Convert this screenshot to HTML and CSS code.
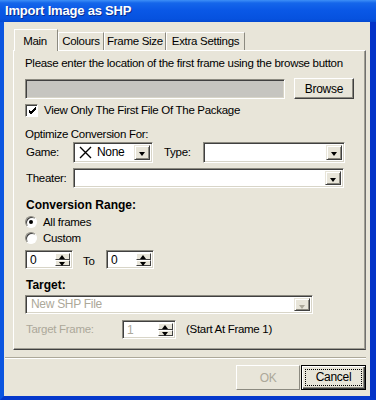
FILE: index.html
```html
<!DOCTYPE html>
<html lang="en">

<head>
    <meta charset="UTF-8">
    <title>Import Image as SHP</title>
    <link rel="stylesheet" href="styles.css">
</head>

<body>
    <div class="window">
        <div class="titlebar">Import Image as SHP</div>

        <div class="client">
            <div class="tabs">
                <div class="tab active">Main</div>
                <div class="tab">Colours</div>
                <div class="tab">Frame Size</div>
                <div class="tab">Extra Settings</div>
            </div>

            <div class="panel">
                <div class="row label-row">Please enter the location of the first frame using the browse button</div>

                <div class="row file-row">
                    <div class="textbox readonly"></div>
                    <button class="btn browse">Browse</button>
                </div>

                <div class="row check-row">
                    <span class="checkbox">
                        <svg width="9" height="9" viewBox="0 0 9 9">
                            <path d="M1 4 L3 6 L8 1 M1 5 L3 7 L8 2 M1 6 L3 8 L8 3" stroke="#000" stroke-width="1" fill="none"/>
                        </svg>
                    </span>
                    <span>View Only The First File Of The Package</span>
                </div>

                <div class="row optimize-row">Optimize Conversion For:</div>

                <div class="row game-row">
                    <span class="field-label">Game:</span>
                    <div class="combo game-combo">
                        <span class="combo-value">
                            <svg width="13" height="13" viewBox="0 0 13 13">
                                <path d="M1 1 L12 12 M12 1 L1 12" stroke="#000" stroke-width="1.4" fill="none"/>
                            </svg>
                            None
                        </span>
                        <span class="drop"></span>
                    </div>
                    <span class="field-label type-label">Type:</span>
                    <div class="combo type-combo"><span class="combo-value"></span><span class="drop"></span></div>
                </div>

                <div class="row theater-row">
                    <span class="field-label">Theater:</span>
                    <div class="combo theater-combo"><span class="combo-value"></span><span class="drop"></span></div>
                </div>

                <div class="row heading range-heading">Conversion Range:</div>

                <div class="row radio-row first">
                    <span class="radio checked"></span>
                    <span>All frames</span>
                </div>
                <div class="row radio-row">
                    <span class="radio"></span>
                    <span>Custom</span>
                </div>

                <div class="row spin-row">
                    <div class="spin range-spin"><span class="spin-value">0</span><span class="spin-btns"><span class="up"></span><span class="down"></span></span></div>
                    <span class="to-label">To</span>
                    <div class="spin range-spin"><span class="spin-value">0</span><span class="spin-btns"><span class="up"></span><span class="down"></span></span></div>
                </div>

                <div class="row heading target-heading">Target:</div>

                <div class="row target-row">
                    <div class="combo target-combo disabled"><span class="combo-value">New SHP File</span><span class="drop"></span></div>
                </div>

                <div class="row frame-row">
                    <span class="frame-label">Target Frame:</span>
                    <div class="spin frame-spin disabled"><span class="spin-value">1</span><span class="spin-btns"><span class="up"></span><span class="down"></span></span></div>
                    <span class="start-note">(Start At Frame 1)</span>
                </div>
            </div>

            <div class="separator"></div>

            <div class="buttons">
                <button class="btn ok" disabled>OK</button>
                <button class="btn cancel"><span class="focus">Cancel</span></button>
            </div>
        </div>
    </div>
</body>

</html>
```

FILE: styles.css
```css
:root {
    --face: #e8e5d9;
    --light: #ffffff;
    --shadow: #8c8a80;
    --dark: #404040;
    --gray-text: #aca899;
}

* {
    box-sizing: border-box;
    margin: 0;
    padding: 0;
}

body {
    font-family: 'Liberation Sans', Arial, sans-serif;
    font-size: 11.5px;
    letter-spacing: -0.3px;
    color: #000;
    background: #fff;
}

.window {
    width: 376px;
    height: 400px;
    display: flex;
    flex-direction: column;
}

.titlebar {
    height: 22px;
    padding: 3px 0 0 5px;
    color: #fff;
    font-weight: bold;
    font-size: 13px;
    letter-spacing: -0.2px;
    line-height: 16px;
    background: linear-gradient(#3d8ff7 0, #1566ea 3px, #0a58e6 10px, #0652df 19px, #0448d0 22px);
    text-shadow: 1px 1px #0a2f8f;
}

.client {
    flex: 1;
    background: var(--face);
    border-left: 4px solid #0b55e0;
    border-right: 6px solid #0433c8;
    border-bottom: 4px solid #0438cc;
    display: flex;
    flex-direction: column;
}

/* tabs */
.tabs {
    display: flex;
    align-items: flex-end;
    height: 28px;
    padding-left: 10px;
}

.tab {
    height: 18px;
    line-height: 16px;
    text-align: center;
    white-space: nowrap;
    border-top: 1px solid var(--light);
    border-left: 1px solid var(--light);
    border-right: 1px solid var(--shadow);
}

.tab.active {
    position: relative;
    height: 22px;
    width: 44px;
    padding: 3px 2px 0 0;
    margin-bottom: -1px;
    background: var(--face);
    z-index: 1;
}

.tab:nth-child(2) {
    width: 46px;
}

.tab:nth-child(3) {
    width: 62px;
}

.tab:nth-child(4) {
    width: 79px;
}

.panel {
    height: 300px;
    margin: 0 4px 0 9px;
    padding: 0 11px;
    border-top: 1px solid var(--light);
    border-left: 1px solid var(--light);
    border-right: 1px solid #707070;
    border-bottom: 1px solid var(--dark);
    box-shadow: inset -1px -1px #a09e94;
}

.row {
    display: flex;
    align-items: center;
    line-height: 13px;
    white-space: nowrap;
}

.label-row {
    margin-top: 6px;
    height: 13px;
}

.file-row {
    margin-top: 8px;
    height: 21px;
}

.check-row {
    margin-top: 4px;
    height: 14px;
}

.optimize-row {
    margin-top: 11px;
    height: 13px;
}

.game-row {
    margin-top: 1px;
    height: 21px;
}

.theater-row {
    margin-top: 5px;
    height: 20px;
}

.range-heading {
    margin-top: 10px;
    height: 14px;
}

.radio-row {
    margin-top: 2px;
    height: 14px;
}

.radio-row.first {
    margin-top: 3px;
}

.spin-row {
    margin-top: 5px;
    height: 19px;
}

.target-heading {
    margin-top: 9px;
    height: 14px;
}

.target-row {
    margin-top: 3px;
    height: 19px;
}

.frame-row {
    margin-top: 6px;
    height: 19px;
}

.heading {
    font-weight: bold;
    font-size: 12px;
    letter-spacing: 0;
    padding-left: 1px;
}

/* sunken boxes */
.textbox,
.combo,
.spin {
    border: 1px solid;
    border-color: var(--shadow) var(--light) var(--light) var(--shadow);
    box-shadow: inset 1px 1px var(--dark), inset -1px -1px #d8d5c8;
    background: #fff;
}

.textbox.readonly {
    width: 264px;
    height: 20px;
    background: #c6c5c0;
}

.btn {
    font-family: inherit;
    font-size: 11.5px;
    letter-spacing: -0.3px;
    color: #000;
    background: var(--face);
    border: 1px solid;
    border-color: var(--light) var(--dark) var(--dark) var(--light);
    box-shadow: inset -1px -1px #8c8a80;
}

.browse {
    width: 61px;
    height: 21px;
    margin-left: 9px;
    font-size: 12px;
}

.checkbox {
    width: 13px;
    height: 13px;
    margin-right: 6px;
    border: 1px solid;
    border-color: var(--shadow) var(--light) var(--light) var(--shadow);
    box-shadow: inset 1px 1px var(--dark);
    background: #fff;
    display: flex;
    align-items: center;
    justify-content: center;
    padding: 1px 0 0 1px;
}

.field-label {
    width: 48px;
    padding-left: 1px;
}

.type-label {
    width: 40px;
    margin-left: 10px;
}

.combo {
    display: flex;
    height: 21px;
    padding: 2px;
}

.combo-value {
    flex: 1;
    display: flex;
    align-items: center;
    gap: 5px;
    padding-left: 3px;
    font-size: 12px;
}

.drop {
    position: relative;
    width: 16px;
    border: 1px solid;
    border-color: var(--face) var(--dark) var(--dark) var(--face);
    box-shadow: inset 1px 1px var(--light), inset -1px -1px #8c8a80;
    background: var(--face);
}

.drop::after {
    content: '';
    position: absolute;
    left: 4px;
    top: 6px;
    border-left: 3.5px solid transparent;
    border-right: 3.5px solid transparent;
    border-top: 4px solid #000;
}

.game-combo {
    width: 80px;
}

.type-combo {
    width: 142px;
}

.theater-combo {
    width: 271px;
    height: 20px;
}

.target-combo {
    width: 288px;
    height: 19px;
}

.disabled .combo-value,
.disabled .spin-value {
    color: var(--gray-text);
}

.disabled .drop::after {
    border-top-color: var(--gray-text);
}

/* radio */
.radio {
    position: relative;
    width: 12px;
    height: 12px;
    margin-right: 6px;
    border-radius: 50%;
    border: 1px solid;
    border-color: var(--shadow) var(--light) var(--light) var(--shadow);
    box-shadow: inset 1px 1px var(--dark);
    background: #fff;
}

.radio.checked::after {
    content: '';
    position: absolute;
    left: 3px;
    top: 3px;
    width: 4px;
    height: 4px;
    border-radius: 50%;
    background: #000;
}

/* spin */
.spin {
    display: flex;
    height: 19px;
    padding: 2px;
}

.spin-value {
    flex: 1;
    padding-left: 2px;
    font-size: 12px;
    line-height: 14px;
}

.spin-btns {
    width: 15px;
    display: flex;
    flex-direction: column;
}

.spin-btns span {
    position: relative;
    flex: 1;
    background: var(--face);
    border: 1px solid;
    border-color: var(--light) var(--dark) var(--dark) var(--light);
}

.spin-btns .up::after,
.spin-btns .down::after {
    content: '';
    position: absolute;
    left: 3px;
    top: 1px;
    border-left: 3.5px solid transparent;
    border-right: 3.5px solid transparent;
}

.spin-btns .up::after {
    border-bottom: 4px solid #000;
}

.spin-btns .down::after {
    border-top: 4px solid #000;
}

.range-spin {
    width: 48px;
}

.to-label {
    width: 33px;
    padding-left: 10px;
    padding-top: 3px;
}

.frame-label {
    width: 97px;
    padding-left: 1px;
    color: var(--gray-text);
}

.frame-spin {
    width: 54px;
}

.start-note {
    margin-left: 10px;
}

/* footer */
.separator {
    margin: 7px 4px 0 1px;
    height: 2px;
    border-top: 1px solid #aca899;
    border-bottom: 1px solid var(--light);
}

.buttons {
    display: flex;
    justify-content: flex-end;
    margin: 6px 4px 0 0;
}

.ok {
    width: 64px;
    height: 25px;
    font-size: 12px;
    color: var(--gray-text);
    border-color: var(--light) var(--shadow) var(--shadow) var(--light);
    box-shadow: none;
}

.cancel {
    width: 65px;
    height: 25px;
    margin-left: 1px;
    padding: 3px;
    font-size: 12px;
    border: 1px solid #000;
    box-shadow: inset 1px 1px var(--light), inset -1px -1px var(--dark), inset -2px -2px #8c8a80;
}

.cancel .focus {
    display: block;
    height: 100%;
    line-height: 15px;
    border: 1px dotted #000;
}
```
